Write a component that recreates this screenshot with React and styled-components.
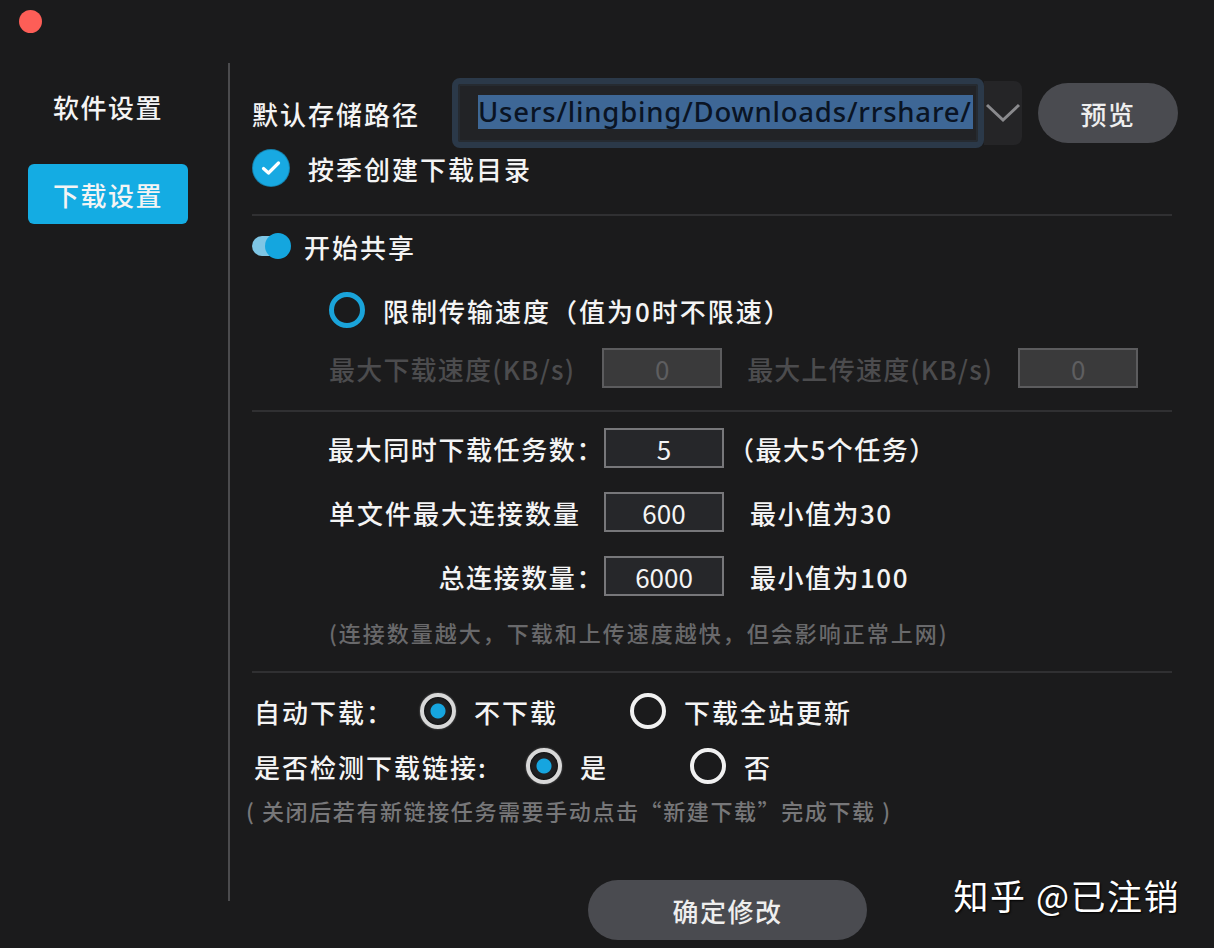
import React from "react";
import styled, { createGlobalStyle } from "styled-components";

const GlobalStyle = createGlobalStyle`
  html, body {
    margin: 0;
    padding: 0;
    background: #1b1b1c;
  }
  body {
    font-family: "Noto Sans CJK SC", "Noto Sans", sans-serif;
    font-weight: 500;
    color: #f2f2f2;
  }
  * {
    box-sizing: border-box;
  }
`;

const App = () => {
  return (
    <>
      <GlobalStyle />
      <Window>
        <TitleBar>
          <CloseDot />
        </TitleBar>

        <Body>
          <Sidebar>
            <NavItem>软件设置</NavItem>
            <NavItem active>下载设置</NavItem>
          </Sidebar>

          <Main>
            <PathRow>
              <Label>默认存储路径</Label>
              <PathField>
                <PathInput>
                  <Selected>Users/lingbing/Downloads/rrshare/</Selected>
                </PathInput>
                <Dropdown>
                  <svg width="38" height="22" viewBox="0 0 38 22">
                    <path
                      d="M3 3 L19 18 L35 3"
                      fill="none"
                      stroke="#8a8a8d"
                      strokeWidth="3"
                    />
                  </svg>
                </Dropdown>
              </PathField>
              <PillButton small>预览</PillButton>
            </PathRow>

            <Row>
              <CheckCircle>
                <svg width="20" height="16" viewBox="0 0 20 16">
                  <path
                    d="M2.5 8.5 L7.5 13 L17.5 3"
                    fill="none"
                    stroke="#fff"
                    strokeWidth="3.2"
                    strokeLinecap="round"
                    strokeLinejoin="round"
                  />
                </svg>
              </CheckCircle>
              <Text>按季创建下载目录</Text>
            </Row>

            <Divider top={26} />

            <Row top={10}>
              <Toggle>
                <Knob />
              </Toggle>
              <Text>开始共享</Text>
            </Row>

            <Row top={24} indent={77}>
              <Radio kind="blue" />
              <Text>限制传输速度（值为0时不限速）</Text>
            </Row>

            <Row top={18} indent={77}>
              <Text muted>最大下载速度(KB/s)</Text>
              <NumBox disabled left={27}>0</NumBox>
              <Text muted left={25}>最大上传速度(KB/s)</Text>
              <NumBox disabled left={25}>0</NumBox>
            </Row>

            <Divider top={22} />

            <FormGrid>
              <GridLabel>最大同时下载任务数：</GridLabel>
              <NumBox>5</NumBox>
              <GridHint>（最大5个任务）</GridHint>

              <GridLabel start>单文件最大连接数量</GridLabel>
              <NumBox>600</NumBox>
              <GridHint pad>最小值为30</GridHint>

              <GridLabel>总连接数量：</GridLabel>
              <NumBox>6000</NumBox>
              <GridHint pad>最小值为100</GridHint>
            </FormGrid>

            <Note indent={77} top={21}>
              (连接数量越大，下载和上传速度越快，但会影响正常上网)
            </Note>

            <Divider top={24} />

            <OptionRow top={18}>
              <OptionLabel width={166}>自动下载：</OptionLabel>
              <Option width={210}>
                <Radio kind="on" />
                <Text>不下载</Text>
              </Option>
              <Option>
                <Radio kind="off" />
                <Text>下载全站更新</Text>
              </Option>
            </OptionRow>

            <OptionRow top={15}>
              <OptionLabel width={272}>是否检测下载链接:</OptionLabel>
              <Option width={164}>
                <Radio kind="on" />
                <Text>是</Text>
              </Option>
              <Option>
                <Radio kind="off" />
                <Text>否</Text>
              </Option>
            </OptionRow>

            <Note indent={-6} top={9} light>
              ( 关闭后若有新链接任务需要手动点击“新建下载”完成下载 )
            </Note>

            <Footer>
              <PillButton wide>确定修改</PillButton>
            </Footer>
          </Main>
        </Body>

        <Watermark>知乎 @已注销</Watermark>
      </Window>
    </>
  );
};

const Window = styled.div`
  position: relative;
  width: 1214px;
  height: 948px;
  overflow: hidden;
  background: #1b1b1c;
`;

const TitleBar = styled.div`
  height: 63px;
  padding: 10px 0 0 19px;
`;

const CloseDot = styled.div`
  width: 23px;
  height: 23px;
  border-radius: 50%;
  background: #fd5e57;
`;

const Body = styled.div`
  display: flex;
  align-items: flex-start;
`;

const Sidebar = styled.div`
  width: 230px;
  height: 838px;
  flex-shrink: 0;
  border-right: 2px solid #4b4b4d;
  padding: 13px 0 0 28px;
  display: flex;
  flex-direction: column;
  gap: 28px;
`;

const NavItem = styled.div`
  width: 160px;
  height: 60px;
  border-radius: 6px;
  display: flex;
  align-items: center;
  justify-content: center;
  font-size: 26px;
  letter-spacing: 1.5px;
  color: #f4f4f4;
  background: ${(p) => (p.active ? "#14ace3" : "transparent")};
`;

const Main = styled.div`
  flex: 1;
  min-width: 0;
  padding: 15px 42px 0 22px;
  display: flex;
  flex-direction: column;
`;

const PathRow = styled.div`
  display: flex;
  align-items: center;
  height: 70px;
  margin-right: -6px;
`;

const Label = styled.div`
  width: 200px;
  font-size: 26px;
  letter-spacing: 2px;
  color: #f4f4f4;
`;

const PathField = styled.div`
  display: flex;
  align-items: center;
`;

const PathInput = styled.div`
  width: 532px;
  height: 70px;
  border: 6px solid #2b3949;
  border-radius: 8px;
  background: #222326;
  box-shadow: inset 0 0 0 2px #262b31;
  display: flex;
  align-items: center;
  padding-left: 20px;
  overflow: hidden;
`;

const Selected = styled.span`
  background: #3e6796;
  color: #0a1424;
  font-family: "Noto Sans", "Open Sans", sans-serif;
  font-weight: 500;
  font-size: 27.5px;
  letter-spacing: 0.8px;
  line-height: 34px;
  height: 34px;
  margin-top: -2px;
  white-space: nowrap;
  padding-right: 1px;
`;

const Dropdown = styled.div`
  width: 38px;
  height: 64px;
  background: #252527;
  border-radius: 0 8px 8px 0;
  display: flex;
  align-items: center;
  justify-content: center;
`;

const PillButton = styled.div`
  width: ${(p) => (p.wide ? "279px" : "140px")};
  height: 60px;
  flex-shrink: 0;
  margin-left: ${(p) => (p.small ? "16px" : "0")};
  border-radius: 30px;
  background: #4a4b50;
  color: #eeeeee;
  font-size: 26px;
  letter-spacing: 1.5px;
  display: flex;
  align-items: center;
  justify-content: center;
`;

const Row = styled.div`
  display: flex;
  align-items: center;
  height: 40px;
  margin-top: ${(p) => p.top || 0}px;
  padding-left: ${(p) => p.indent || 0}px;
`;

const Text = styled.span`
  font-size: 26px;
  letter-spacing: ${(p) => (p.muted ? "1.2px" : "2px")};
  color: ${(p) => (p.muted ? "#4c4c4e" : "#f4f4f4")};
  margin-left: ${(p) => p.left || 0}px;
  white-space: nowrap;
`;

const CheckCircle = styled.div`
  width: 36px;
  height: 36px;
  margin-left: 1px;
  margin-right: 19px;
  border-radius: 50%;
  background: #18a9e2;
  box-shadow: 0 0 0 1px #1682ad;
  display: flex;
  align-items: center;
  justify-content: center;
`;

const Divider = styled.div`
  height: 2px;
  background: #303032;
  margin-top: ${(p) => p.top || 0}px;
`;

const Toggle = styled.div`
  position: relative;
  width: 38px;
  height: 20px;
  border-radius: 10px;
  background: #7ec6e5;
  margin-right: 14px;
`;

const Knob = styled.div`
  position: absolute;
  right: -1px;
  top: -3px;
  width: 26px;
  height: 26px;
  border-radius: 50%;
  background: #14a6df;
`;

const radioStyles = {
  blue: `
    border: 5px solid #1aa4da;
    background: transparent;
  `,
  on: `
    border: 4px solid #d8d8d8;
    background: radial-gradient(circle, #16a5df 0 7px, #1f2022 8px);
    box-shadow: inset 0 0 3px #000, 0 0 2px #777;
  `,
  off: `
    border: 4px solid #f1f1f1;
    background: transparent;
  `,
};

const Radio = styled.div`
  width: 36px;
  height: 36px;
  flex-shrink: 0;
  border-radius: 50%;
  margin-right: 18px;
  ${(p) => radioStyles[p.kind]}
`;

const NumBox = styled.div`
  width: 120px;
  height: 40px;
  flex-shrink: 0;
  margin-left: ${(p) => p.left || 0}px;
  border: 2px solid ${(p) => (p.disabled ? "#5c5c5e" : "#77777a")};
  background: ${(p) => (p.disabled ? "#3a3a3b" : "#26272a")};
  color: ${(p) => (p.disabled ? "#5e5e60" : "#f4f4f4")};
  font-size: 26px;
  font-weight: 400;
  display: flex;
  align-items: center;
  justify-content: center;
`;

const FormGrid = styled.div`
  display: grid;
  grid-template-columns: 275px 120px auto;
  row-gap: 24px;
  align-items: center;
  margin-top: 16px;
  padding-left: 77px;
`;

const GridLabel = styled.span`
  justify-self: ${(p) => (p.start ? "start" : "end")};
  font-size: 26px;
  letter-spacing: ${(p) => (p.start ? "2px" : "1.6px")};
  color: #f4f4f4;
  white-space: nowrap;
`;

const GridHint = styled.span`
  font-size: 26px;
  letter-spacing: 1.5px;
  color: #f4f4f4;
  padding-left: ${(p) => (p.pad ? "26px" : "4px")};
  white-space: nowrap;
`;

const Note = styled.div`
  font-size: 22px;
  line-height: 30px;
  letter-spacing: ${(p) => (p.light ? "1.6px" : "2px")};
  color: ${(p) => (p.light ? "#777779" : "#69696b")};
  margin-top: ${(p) => p.top || 0}px;
  padding-left: ${(p) => (p.indent > 0 ? p.indent : 0)}px;
  margin-left: ${(p) => (p.indent < 0 ? p.indent : 0)}px;
  white-space: nowrap;
`;

const OptionRow = styled.div`
  display: flex;
  align-items: center;
  height: 40px;
  margin-top: ${(p) => p.top || 0}px;
  padding-left: 2px;
`;

const OptionLabel = styled.span`
  width: ${(p) => p.width}px;
  font-size: 26px;
  letter-spacing: 2px;
  color: #f4f4f4;
  white-space: nowrap;
`;

const Option = styled.div`
  display: flex;
  align-items: center;
  width: ${(p) => (p.width ? `${p.width}px` : "auto")};
`;

const Footer = styled.div`
  margin-top: 55px;
  padding-left: 336px;
`;

const Watermark = styled.div`
  position: absolute;
  right: 34px;
  bottom: 28px;
  font-size: 35px;
  font-weight: 400;
  color: #ffffff;
  text-shadow: 1px 1px 2px #000;
  letter-spacing: 1.5px;
`;

export default App;
